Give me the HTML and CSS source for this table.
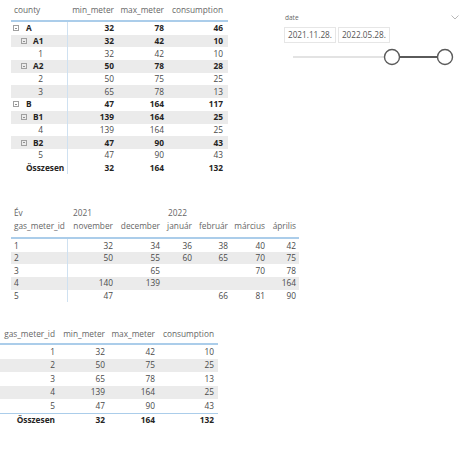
FILE: index.html
```html
<!DOCTYPE html>
<html>
<head>
<meta charset="utf-8">
<link rel="stylesheet" href="styles.css">
</head>
<body>
<div class="page">
  <div class="top">
    <div class="t1">
      <div class="row hdr">
        <div class="c first left">county</div>
        <div class="c">min_meter</div>
        <div class="c">max_meter</div>
        <div class="c">consumption</div>
      </div>
      <div class="row b"><div class="c first lv0"><span class="ex"></span>A</div><div class="c">32</div><div class="c">78</div><div class="c">46</div></div>
      <div class="row b alt"><div class="c first lv1"><span class="ex"></span>A1</div><div class="c">32</div><div class="c">42</div><div class="c">10</div></div>
      <div class="row"><div class="c first"><span class="leaf">1</span></div><div class="c">32</div><div class="c">42</div><div class="c">10</div></div>
      <div class="row b alt"><div class="c first lv1"><span class="ex"></span>A2</div><div class="c">50</div><div class="c">78</div><div class="c">28</div></div>
      <div class="row"><div class="c first"><span class="leaf">2</span></div><div class="c">50</div><div class="c">75</div><div class="c">25</div></div>
      <div class="row alt"><div class="c first"><span class="leaf">3</span></div><div class="c">65</div><div class="c">78</div><div class="c">13</div></div>
      <div class="row b"><div class="c first lv0"><span class="ex"></span>B</div><div class="c">47</div><div class="c">164</div><div class="c">117</div></div>
      <div class="row b alt"><div class="c first lv1"><span class="ex"></span>B1</div><div class="c">139</div><div class="c">164</div><div class="c">25</div></div>
      <div class="row"><div class="c first"><span class="leaf">4</span></div><div class="c">139</div><div class="c">164</div><div class="c">25</div></div>
      <div class="row b alt"><div class="c first lv1"><span class="ex"></span>B2</div><div class="c">47</div><div class="c">90</div><div class="c">43</div></div>
      <div class="row"><div class="c first"><span class="leaf">5</span></div><div class="c">47</div><div class="c">90</div><div class="c">43</div></div>
      <div class="row b"><div class="c first tot">Összesen</div><div class="c">32</div><div class="c">164</div><div class="c">132</div></div>
    </div>

    <div class="slicer">
      <div class="sl-head">
        <span class="sl-title">date</span>
        <svg class="chev" width="8" height="5" viewBox="0 0 8 5"><path d="M0.5 0.5 L4 4 L7.5 0.5" fill="none" stroke="#b0b0b0" stroke-width="0.9"/></svg>
      </div>
      <div class="sl-boxes">
        <div class="sl-box">2021.11.28.</div>
        <div class="sl-box">2022.05.28.</div>
      </div>
      <svg class="sl-track" width="176" height="20" viewBox="0 0 176 20">
        <line x1="9" y1="10" x2="100" y2="10" stroke="#e3e3e3" stroke-width="2"/>
        <line x1="108" y1="10" x2="153" y2="10" stroke="#5a5a5a" stroke-width="2"/>
        <circle cx="108" cy="10" r="7.5" fill="#fff" stroke="#5a5a5a" stroke-width="1.4"/>
        <circle cx="161" cy="10" r="7.5" fill="#fff" stroke="#5a5a5a" stroke-width="1.4"/>
      </svg>
    </div>
  </div>

  <div class="t2">
    <div class="hdr2">
      <div class="row yr">
        <div class="c first left">Év</div>
        <div class="c yl span2">2021</div>
        <div class="c yl span4">2022</div>
      </div>
      <div class="row">
        <div class="c first left">gas_meter_id</div>
        <div class="c">november</div>
        <div class="c">december</div>
        <div class="c">január</div>
        <div class="c">február</div>
        <div class="c">március</div>
        <div class="c">április</div>
      </div>
    </div>
    <div class="row"><div class="c first left">1</div><div class="c">32</div><div class="c">34</div><div class="c">36</div><div class="c">38</div><div class="c">40</div><div class="c">42</div></div>
    <div class="row alt"><div class="c first left">2</div><div class="c">50</div><div class="c">55</div><div class="c">60</div><div class="c">65</div><div class="c">70</div><div class="c">75</div></div>
    <div class="row"><div class="c first left">3</div><div class="c"></div><div class="c">65</div><div class="c"></div><div class="c"></div><div class="c">70</div><div class="c">78</div></div>
    <div class="row alt"><div class="c first left">4</div><div class="c">140</div><div class="c">139</div><div class="c"></div><div class="c"></div><div class="c"></div><div class="c">164</div></div>
    <div class="row"><div class="c first left">5</div><div class="c">47</div><div class="c"></div><div class="c"></div><div class="c">66</div><div class="c">81</div><div class="c">90</div></div>
  </div>

  <div class="t3">
    <div class="row hdr">
      <div class="c">gas_meter_id</div>
      <div class="c">min_meter</div>
      <div class="c">max_meter</div>
      <div class="c">consumption</div>
    </div>
    <div class="row"><div class="c">1</div><div class="c">32</div><div class="c">42</div><div class="c">10</div></div>
    <div class="row alt"><div class="c">2</div><div class="c">50</div><div class="c">75</div><div class="c">25</div></div>
    <div class="row"><div class="c">3</div><div class="c">65</div><div class="c">78</div><div class="c">13</div></div>
    <div class="row alt"><div class="c">4</div><div class="c">139</div><div class="c">164</div><div class="c">25</div></div>
    <div class="row"><div class="c">5</div><div class="c">47</div><div class="c">90</div><div class="c">43</div></div>
    <div class="row b total"><div class="c">Összesen</div><div class="c">32</div><div class="c">164</div><div class="c">132</div></div>
  </div>
</div>
</body>
</html>
```

FILE: styles.css
```css
* { box-sizing: border-box; }
html, body { margin: 0; padding: 0; background: #fff; }
body {
  width: 474px;
  height: 464px;
  overflow: hidden;
  font-family: "Open Sans", "Noto Sans", sans-serif;
  font-size: 8.3px;
  color: #4a4a4a;
}
.page { position: relative; }

.row { display: grid; align-items: center; }
.c { text-align: right; white-space: nowrap; line-height: 12px; }
.c.left { text-align: left; }
.alt { background: #ebebeb; }
.b { font-weight: 700; color: #252423; }

/* ---------- top area ---------- */
.top { display: flex; align-items: flex-start; padding-top: 3px; }

.t1 { margin-left: 11px; width: 217px; }
.t1 .row { grid-template-columns: 57px 49px 50px 61px; height: 12.7px; }
.t1 .row .c:nth-child(2),
.t1 .row .c:nth-child(3) { padding-right: 3px; }
.t1 .row .c:nth-child(4) { padding-right: 5px; }
.t1 .row .first { height: 100%; display: flex; align-items: center; border-right: 1px solid #cfe1f1; text-align: left; }
.t1 .row.hdr { height: 19px; align-items: start; padding-top: 1px; border-bottom: 2px solid #abcdea; color: #666; font-weight: 400; }
.t1 .row.hdr .first { border-right: none; padding-left: 3px; height: auto; }
.t1 .lv0 { padding-left: 2px; }
.t1 .lv1 { padding-left: 10px; }
.t1 .tot { padding-left: 15px; }
.leaf { display: inline-block; width: 32px; text-align: right; font-weight: 400; color: #4a4a4a; }

.ex {
  display: inline-block;
  width: 6px;
  height: 6px;
  border: 1px solid #a0a0a0;
  margin-right: 7px;
  position: relative;
}
.lv1 .ex { margin-right: 6px; }
.ex::after {
  content: "";
  position: absolute;
  left: 1px;
  right: 1px;
  top: 1.5px;
  height: 1px;
  background: #909090;
}

/* ---------- slicer ---------- */
.slicer { margin-left: 56px; width: 178px; padding-top: 10px; }
.sl-head { display: flex; justify-content: space-between; align-items: center; height: 9px; padding-left: 1px; padding-right: 3px; }
.sl-title { font-size: 6.5px; color: #666; line-height: 9px; }
.sl-boxes { display: flex; gap: 2px; margin-top: 5px; }
.sl-box {
  border: 1px solid #e6e6e6;
  height: 16px;
  padding: 0 3px;
  line-height: 14px;
  color: #555;
  font-size: 8.2px;
}
.sl-track { display: block; margin-top: 4px; }

/* ---------- matrix 2 ---------- */
.t2 { margin-left: 11px; margin-top: 32px; width: 288px; }
.t2 .row { grid-template-columns: 57px 48px 47px 32px 36px 37px 31px; height: 12.6px; }
.t2 .row .c { padding-right: 3px; }
.t2 .row .first { padding-left: 3px; height: 100%; display: flex; align-items: center; border-right: 1px solid #cfe1f1; }
.t2 .hdr2 { color: #666; border-bottom: 2px solid #abcdea; padding-bottom: 5px; }
.t2 .hdr2 .row .first { border-right: none; }
.t2 .hdr2 .row { height: 13px; }
.t2 .yl { text-align: left; padding-left: 5px; }
.t2 .span2 { grid-column: span 2; }
.t2 .span4 { grid-column: span 4; }

/* ---------- table 3 ---------- */
.t3 { margin-top: 26px; width: 218px; }
.t3 .row { grid-template-columns: 58px 50px 50px 60px; height: 13.5px; }
.t3 .row .c { padding-right: 3px; }
.t3 .row .c:nth-child(4) { padding-right: 4px; }
.t3 .row.hdr { height: 17px; align-items: start; padding-top: 0px; border-bottom: 2px solid #abcdea; color: #666; }
.t3 .row.total { border-top: 1.5px solid #abcdea; height: 13.5px; }
```
